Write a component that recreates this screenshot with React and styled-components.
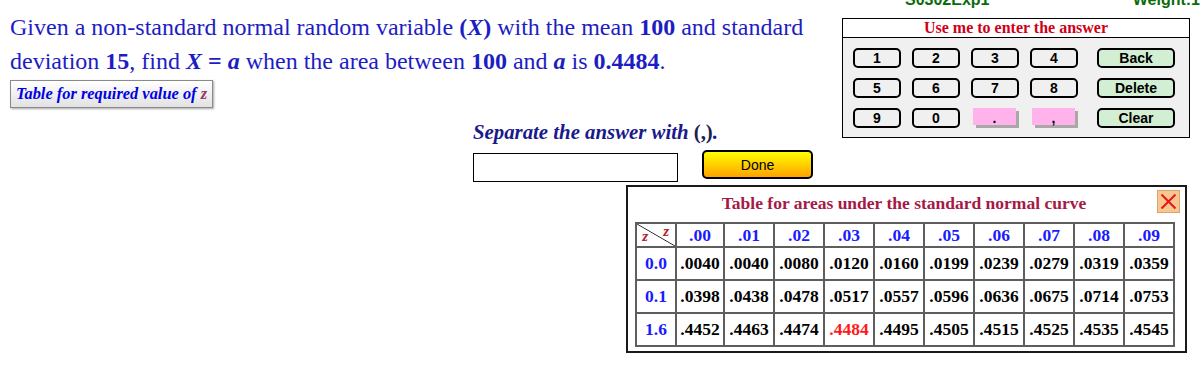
import React from 'react';
import styled, { createGlobalStyle } from 'styled-components';

const GlobalStyle = createGlobalStyle`
  html, body {
    margin: 0;
    padding: 0;
    background: #fff;
    overflow: hidden;
  }
  body {
    font-family: 'Liberation Serif', 'Times New Roman', serif;
  }
  * {
    box-sizing: border-box;
  }
`;

const Page = styled.div`
  width: 1204px;
  height: 369px;
  overflow: hidden;
  display: flex;
  flex-direction: column;
`;

const TopRow = styled.div`
  display: flex;
  align-items: flex-start;
`;

const QuestionColumn = styled.div`
  width: 842px;
  padding: 10px 0 0 10px;
  display: flex;
  flex-direction: column;
  align-items: flex-start;
`;

const Question = styled.p`
  margin: 0;
  font: 24px/34px 'Liberation Serif', serif;
  color: #1d1dc4;
  white-space: nowrap;

  b {
    font-weight: bold;
  }
`;

const TableLink = styled.button`
  margin-top: 2px;
  width: 203px;
  height: 28px;
  padding: 0;
  border: 1px solid #8a8a8a;
  background: linear-gradient(#ffffff, #e2e2e2);
  box-shadow: 1px 1px 2px rgba(0, 0, 0, 0.35);
  font: italic bold 16.4px 'Liberation Serif', serif;
  color: #0000e0;
  white-space: nowrap;

  span {
    color: #993366;
  }
`;

const AnswerBlock = styled.div`
  margin: 13px 0 0 463px;
  display: flex;
  flex-direction: column;
`;

const AnswerLabel = styled.div`
  font: italic bold 20.8px/22px 'Liberation Serif', serif;
  color: #1a1a8a;
  white-space: nowrap;

  span {
    font-style: normal;
    color: #202050;
  }
`;

const AnswerRow = styled.div`
  margin-top: 7px;
  display: flex;
  align-items: flex-start;
  gap: 24px;
`;

const AnswerInput = styled.input`
  margin-top: 3px;
  width: 205px;
  height: 29px;
  border: 1px solid #000;
  padding: 0 4px;
  font: 16px 'Liberation Serif', serif;
  outline: none;
`;

const DoneButton = styled.button`
  width: 111px;
  height: 29px;
  border: 2px solid #000;
  border-radius: 5px;
  background: linear-gradient(#ffff00, #ffa200);
  font: 14px 'Liberation Sans', Arial, sans-serif;
  color: #000;
  padding: 0;
`;

const KeypadColumn = styled.div`
  width: 362px;
  display: flex;
  flex-direction: column;
`;

const CodeHeader = styled.div`
  margin-top: -9px;
  height: 18px;
  padding-left: 63px;
  padding-right: 4px;
  display: flex;
  justify-content: space-between;
  font: bold 16px/18px 'Liberation Sans', Arial, sans-serif;
  color: #0b6b0b;
  white-space: nowrap;
`;

const Keypad = styled.div`
  margin-top: 9px;
  width: 348px;
  border: 1px solid #000;
`;

const KeypadTitle = styled.div`
  height: 19px;
  border-bottom: 1px solid #000;
  background: #fff;
  text-align: center;
  font: bold 16px/18px 'Liberation Serif', serif;
  color: #d00018;
`;

const KeyGrid = styled.div`
  background: #f0f0f0;
  padding: 10px 0 9px 10px;
  display: grid;
  grid-template-columns: repeat(4, 48px) 86px;
  grid-auto-rows: 20px;
  column-gap: 11px;
  row-gap: 10px;
`;

const Key = styled.button`
  justify-self: end;
  width: ${p => (p.$action ? '78px' : '48px')};
  height: 20px;
  padding: 0;
  border: 2px solid #000;
  border-radius: 5px;
  background: ${p => (p.$action ? '#d3efd3' : '#f0f0f0')};
  font: bold 14px 'Liberation Sans', Arial, sans-serif;
  color: #000;
`;

const PinkKey = styled.button`
  justify-self: start;
  margin-left: 2px;
  width: 43px;
  height: 17px;
  padding: 0;
  border: none;
  background: #ffb3ea;
  box-shadow: 3px 3px 0 #a8a8a8;
  font: bold 14px/20px 'Liberation Sans', Arial, sans-serif;
  color: #000;
`;

const TablePanel = styled.div`
  position: relative;
  margin: 3px 0 0 626px;
  width: 561px;
  height: 168px;
  border: 2px solid #1a1a1a;
  padding-left: 7px;
  background: #fff;
`;

const TableTitle = styled.div`
  width: 538px;
  height: 35px;
  text-align: center;
  font: bold 17.5px/33px 'Liberation Serif', serif;
  color: #a51946;
  white-space: nowrap;
`;

const CloseButton = styled.button`
  position: absolute;
  top: 3px;
  right: 5px;
  width: 23px;
  height: 23px;
  padding: 0;
  border: 1px solid #d9a56c;
  background: #f6c78f;
  display: flex;
  align-items: center;
  justify-content: center;
`;

const AreaTable = styled.table`
  border-collapse: collapse;
  table-layout: fixed;
  width: 538px;
  font: bold 17.5px 'Liberation Serif', serif;

  td {
    border: 2px solid #5e5e5e;
    padding: 0;
    text-align: center;
    color: #000;
    white-space: nowrap;
  }
`;

const HeadRow = styled.tr`
  height: 24px;
`;

const BodyRow = styled.tr`
  height: 33px;
`;

const HeadCell = styled.td`
  && {
    color: #1a1aff;
  }
`;

const ValueCell = styled.td`
  && {
    color: ${p => (p.$hit ? '#ff1a1a' : '#000')};
  }
`;

const CornerCell = styled.td`
  position: relative;
  background: linear-gradient(
    to top right,
    transparent calc(50% - 0.8px),
    #222 50%,
    transparent calc(50% + 0.8px)
  );
`;

const CornerZ = styled.span`
  position: absolute;
  font: italic bold 15px/14px 'Liberation Serif', serif;
  color: #b0202a;
  ${p => (p.$top ? 'top: 0; right: 6px;' : 'bottom: 0; left: 5px; transform: rotate(180deg);')}
`;

const heads = ['.00', '.01', '.02', '.03', '.04', '.05', '.06', '.07', '.08', '.09'];

const rows = [
  { z: '0.0', v: ['.0040', '.0040', '.0080', '.0120', '.0160', '.0199', '.0239', '.0279', '.0319', '.0359'] },
  { z: '0.1', v: ['.0398', '.0438', '.0478', '.0517', '.0557', '.0596', '.0636', '.0675', '.0714', '.0753'] },
  { z: '1.6', v: ['.4452', '.4463', '.4474', '.4484', '.4495', '.4505', '.4515', '.4525', '.4535', '.4545'] },
];

export default function App() {
  return (
    <Page>
      <GlobalStyle />
      <TopRow>
        <QuestionColumn>
          <Question>
            Given a non-standard normal random variable <b>(<i>X</i>)</b> with the mean <b>100</b> and standard
            <br />
            deviation <b>15</b>, find <b><i>X</i> = <i>a</i></b> when the area between <b>100</b> and <b><i>a</i></b> is{' '}
            <b>0.4484</b>.
          </Question>
          <TableLink>
            Table for required value of <span>z</span>
          </TableLink>
          <AnswerBlock>
            <AnswerLabel>
              Separate the answer with <span>(,)</span>.
            </AnswerLabel>
            <AnswerRow>
              <AnswerInput type="text" />
              <DoneButton>Done</DoneButton>
            </AnswerRow>
          </AnswerBlock>
        </QuestionColumn>

        <KeypadColumn>
          <CodeHeader>
            <span>S0302Exp1</span>
            <span>Weight:1</span>
          </CodeHeader>
          <Keypad>
            <KeypadTitle>Use me to enter the answer</KeypadTitle>
            <KeyGrid>
              <Key>1</Key>
              <Key>2</Key>
              <Key>3</Key>
              <Key>4</Key>
              <Key $action>Back</Key>
              <Key>5</Key>
              <Key>6</Key>
              <Key>7</Key>
              <Key>8</Key>
              <Key $action>Delete</Key>
              <Key>9</Key>
              <Key>0</Key>
              <PinkKey>.</PinkKey>
              <PinkKey>,</PinkKey>
              <Key $action>Clear</Key>
            </KeyGrid>
          </Keypad>
        </KeypadColumn>
      </TopRow>

      <TablePanel>
        <TableTitle>Table for areas under the standard normal curve</TableTitle>
        <CloseButton aria-label="close">
          <svg width="17" height="17" viewBox="0 0 17 17">
            <path d="M1.5 1.5 L15.5 15.5 M15.5 1.5 L1.5 15.5" stroke="#e8141c" strokeWidth="2" />
          </svg>
        </CloseButton>
        <AreaTable>
          <colgroup>
            <col style={{ width: 40 }} />
            <col style={{ width: 48 }} />
            {heads.slice(1).map(h => (
              <col key={h} style={{ width: 50 }} />
            ))}
          </colgroup>
          <tbody>
            <HeadRow>
              <CornerCell>
                <CornerZ $top>z</CornerZ>
                <CornerZ>z</CornerZ>
              </CornerCell>
              {heads.map(h => (
                <HeadCell key={h}>{h}</HeadCell>
              ))}
            </HeadRow>
            {rows.map(r => (
              <BodyRow key={r.z}>
                <HeadCell>{r.z}</HeadCell>
                {r.v.map((v, i) => (
                  <ValueCell key={i} $hit={r.z === '1.6' && i === 3}>
                    {v}
                  </ValueCell>
                ))}
              </BodyRow>
            ))}
          </tbody>
        </AreaTable>
      </TablePanel>
    </Page>
  );
}
